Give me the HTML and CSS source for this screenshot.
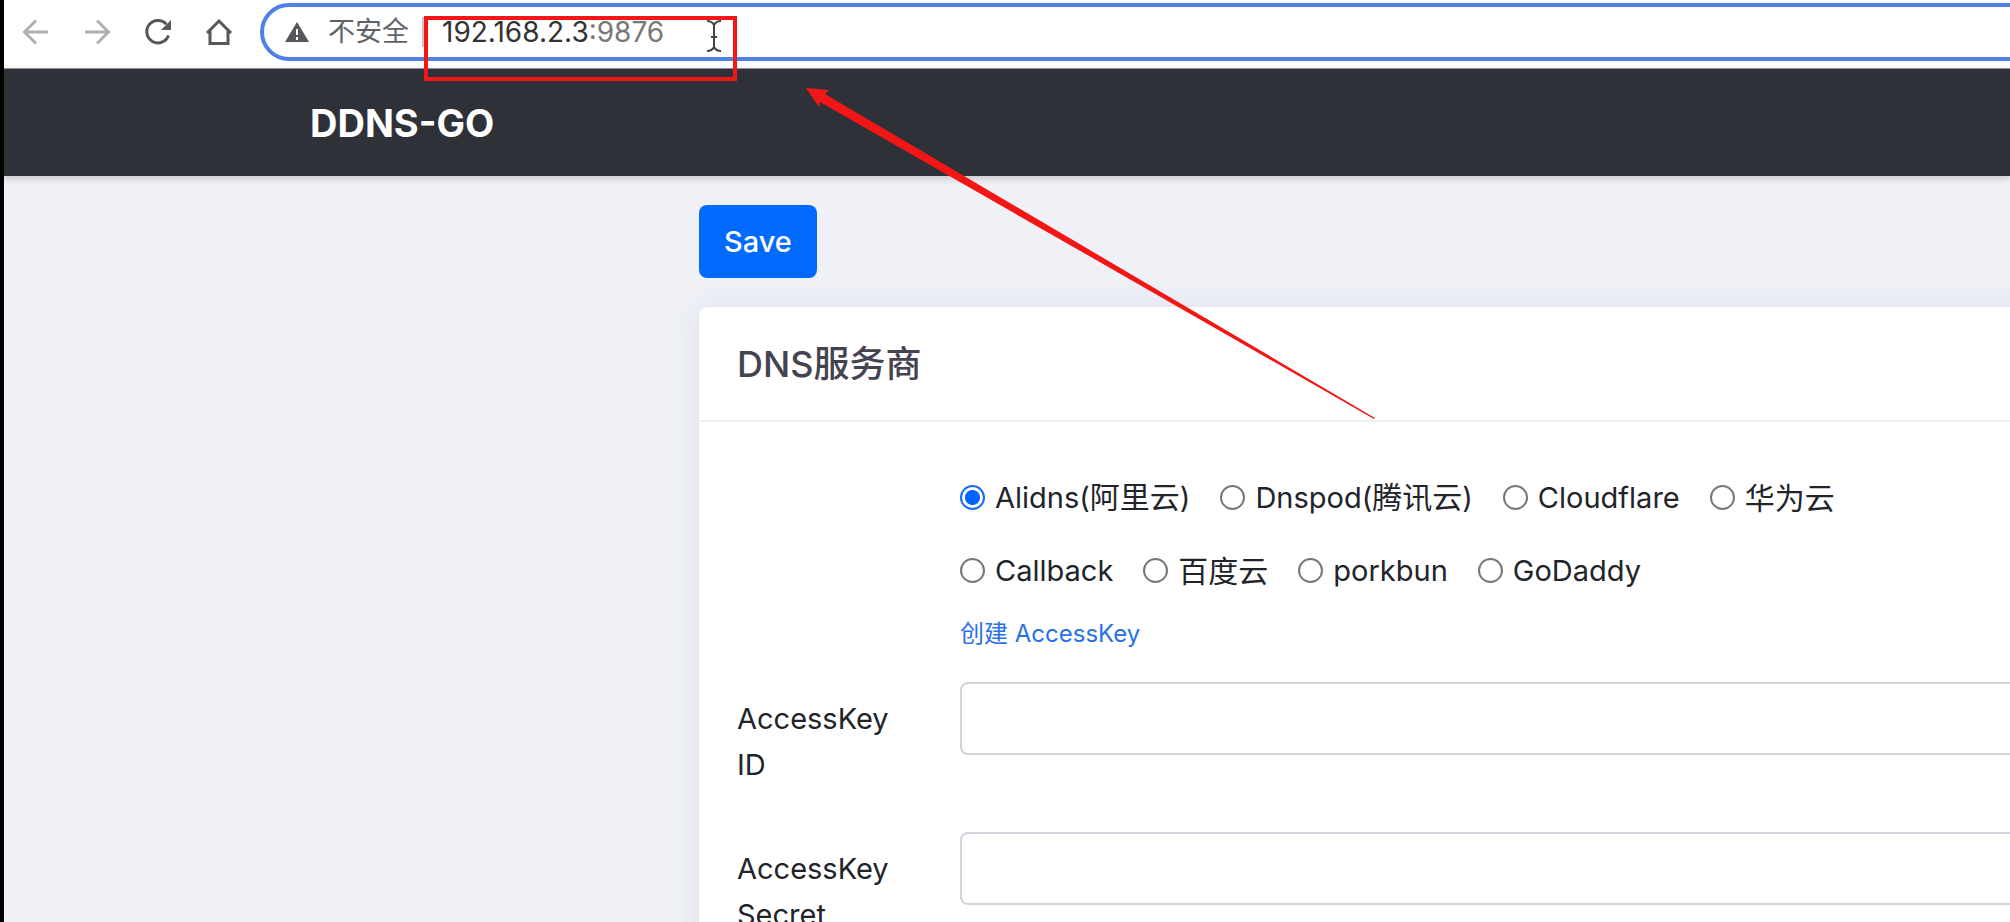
FILE: index.html
```html
<!DOCTYPE html>
<html lang="zh-CN">
<head>
<meta charset="utf-8">
<title>DDNS-GO</title>
<link rel="stylesheet" href="styles.css">
</head>
<body>
<div class="window">
  <div class="toolbar">
    <div class="nav-buttons">
      <button class="nav-button nav-disabled" type="button" aria-label="后退">
        <svg width="28" height="28" viewBox="0 0 28 28"><path d="M26 14H3M14 2.500L2.500 14L14 25.500"/></svg>
      </button>
      <button class="nav-button nav-disabled" type="button" aria-label="前进">
        <svg width="28" height="28" viewBox="0 0 28 28"><path d="M2 14H25M14 2.500L25.500 14L14 25.500"/></svg>
      </button>
      <button class="nav-button" type="button" aria-label="重新加载">
        <svg width="28" height="28" viewBox="0 0 28 28"><path d="M24.500 17.500A11.200 11.200 0 1 1 22.300 6.200"/><path class="solid" d="M27 2V12H17Z"/></svg>
      </button>
      <button class="nav-button" type="button" aria-label="主页">
        <svg width="28" height="28" viewBox="0 0 28 28"><path d="M2 15L14 3L26 15M5 13V25.500H23V13"/></svg>
      </button>
    </div>
    <div class="omnibox">
      <svg class="warning" width="24" height="22" viewBox="0 0 24 22"><path class="solid" d="M12 1L24 21H0Z"/><path class="mark" d="M12 8V14M12 16V19"/></svg>
      <span class="security">不安全</span>
      <span class="divider"></span>
      <span class="url">192.168.2.3<span class="port">:9876</span></span>
    </div>
  </div>

  <header class="navbar"><a class="brand" href="#">DDNS-GO</a></header>

  <main class="content">
    <button class="save" type="button">Save</button>
    <section class="card">
      <h5 class="card-title">DNS服务商</h5>
      <form class="card-body">
        <div class="row">
          <span></span>
          <div class="providers">
            <div class="options">
              <label class="option"><input type="radio" name="dns" checked><span>Alidns(<span class="han">阿里云</span>)</span></label>
              <label class="option"><input type="radio" name="dns"><span>Dnspod(<span class="han">腾讯云</span>)</span></label>
              <label class="option"><input type="radio" name="dns">Cloudflare</label>
              <label class="option"><input type="radio" name="dns"><span class="han">华为云</span></label>
            </div>
            <div class="options">
              <label class="option"><input type="radio" name="dns">Callback</label>
              <label class="option"><input type="radio" name="dns"><span class="han">百度云</span></label>
              <label class="option"><input type="radio" name="dns">porkbun</label>
              <label class="option"><input type="radio" name="dns">GoDaddy</label>
            </div>
            <a class="help" href="#">创建 AccessKey</a>
          </div>
        </div>
        <div class="row">
          <label class="field-label" for="key-id">AccessKey ID</label>
          <input class="field" id="key-id" type="text">
        </div>
        <div class="row">
          <label class="field-label" for="key-secret">AccessKey Secret</label>
          <input class="field" id="key-secret" type="text">
        </div>
      </form>
    </section>
  </main>

  <div class="highlight"></div>
  <svg class="cursor" width="16" height="34" viewBox="0 0 16 34"><path d="M1 2Q6 2 8 6Q10 2 15 2M8 6V28M1 32Q6 32 8 28Q10 32 15 32M5 18H11"/></svg>
  <svg class="arrow" width="570" height="332" viewBox="0 0 570 332"><path d="M0 0L23 2L19 6L569 330L568 331L14 14L13 19Z"/></svg>
</div>
</body>
</html>
```
FILE: styles.css
```css
* { box-sizing: border-box; }

body {
  margin: 0;
  color: #212529;
  font-family: Inter, "Noto Sans CJK SC", sans-serif;
  font-size: 29px;
  line-height: 46px;
}

.window {
  position: relative;
  height: 100vh;
  overflow: hidden;
  border-left: 4px solid #000;
  background: #eff1f7;
}

.toolbar {
  display: flex;
  align-items: center;
  gap: 24px;
  height: 69px;
  padding: 0 0 5px 17px;
  overflow: hidden;
  background: #fff;
  border-bottom: 1px solid #999;
}

.nav-buttons { display: flex; gap: 29px; }

.nav-button {
  display: flex;
  padding: 1px;
  width: 32px;
  border: 0;
  background: none;
}

svg { flex: none; fill: none; stroke: #56575b; stroke-width: 3; }
.nav-disabled svg { stroke: #b0b0b0; }
.solid { fill: #56575b; stroke: none; }
.mark { stroke: #fff; stroke-width: 2; }

.omnibox {
  display: flex;
  flex: 1;
  align-items: center;
  height: 58px;
  margin-right: -40px;
  padding-left: 21px;
  border: 4px solid #4f80e6;
  border-radius: 29px;
  color: #5f6368;
  font-size: 27px;
}

.security { margin-left: 19px; }
.divider { width: 2px; height: 30px; margin: 0 18px 0 13px; background: #c8c8c8; }
.url { color: #333; font-size: 28px; }
.port { color: #777; }

.navbar {
  height: 107px;
  padding: 31px 306px;
  background: #2e3138;
  box-shadow: 0 2px 8px rgba(0, 0, 0, .2);
}

.brand {
  color: #fff;
  font-size: 38px;
  font-weight: 700;
  text-decoration: none;
}

.content { padding: 29px 0 0 695px; }

.save {
  display: block;
  height: 73px;
  padding: 0 25px;
  border: 0;
  border-radius: 8px;
  background: #006aff;
  color: #fff;
  font: inherit;
  font-weight: 500;
}

.card {
  margin: 29px -60px 0 0;
  border-radius: 8px;
  background: #fff;
  box-shadow: 0 0 32px rgba(60, 50, 100, .08);
}

.card-title {
  margin: 0;
  padding: 34px 38px 33px;
  border-bottom: 2px solid #eeeff1;
  color: #45434f;
  font-size: 36px;
  font-weight: 500;
}

.card-body { padding: 39px 38px; }

.row {
  display: grid;
  grid-template-columns: 223px 1fr;
  min-height: 150px;
}

.row:first-child { min-height: 221px; }

.options {
  display: flex;
  gap: 30px;
  height: 73px;
  align-items: center;
}

.option { display: flex; align-items: center; gap: 10px; }

.han { font-size: 30px; line-height: 1; }

.option input {
  appearance: none;
  width: 25px;
  height: 25px;
  margin: 0;
  border: 2px solid #777;
  border-radius: 50%;
  background: #fff;
}

.option input:checked {
  border-color: #1468f5;
  background: radial-gradient(circle, #0065ff 7px, #fff 8px);
}

.help {
  display: block;
  margin-top: 4px;
  color: #2871e8;
  font-size: 24px;
  text-decoration: none;
}

.field-label { width: 170px; padding-top: 14px; }

.field {
  width: 100%;
  height: 73px;
  padding: 0 24px;
  border: 2px solid #ced4da;
  border-radius: 8px;
  background: #fff;
  font: inherit;
}

.highlight {
  position: absolute;
  left: 420px;
  top: 16px;
  width: 313px;
  height: 65px;
  border: 4px solid #f31616;
}

.cursor { position: absolute; left: 702px; top: 19px; stroke: #444; stroke-width: 2; }
.arrow { position: absolute; left: 802px; top: 88px; fill: #f31616; stroke: none; }
```
